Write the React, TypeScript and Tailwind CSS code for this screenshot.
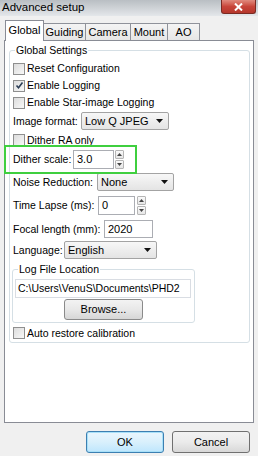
import React from 'react'

function Check({ checked = false }: { checked?: boolean }) {
  return (
    <span className="w-[12px] h-[12px] border border-[#8f8f8f] bg-gradient-to-br from-[#dcdcdc] to-[#f8f8f8] flex items-center justify-center shrink-0">
      {checked && (
        <svg width="9" height="9" viewBox="0 0 9 9">
          <path d="M1.5 4.5 L3.5 6.8 L7.5 1.5" fill="none" stroke="#2a3c55" strokeWidth="1.6" />
        </svg>
      )}
    </span>
  )
}

function CheckRow({ label, checked, h = 'h-[17px]' }: { label: string; checked?: boolean; h?: string }) {
  return (
    <div className={`${h} flex items-center gap-[2px]`}>
      <Check checked={checked} />
      <span>{label}</span>
    </div>
  )
}

function Combo({ value, w }: { value: string; w: string }) {
  return (
    <div className={`${w} h-[18px] border border-[#a3a3a3] rounded-[2px] bg-gradient-to-b from-[#f7f7f7] to-[#e4e4e4] flex items-center justify-between pl-[3px] pr-[5px]`}>
      <span className="text-[11px]">{value}</span>
      <svg width="7" height="4" viewBox="0 0 7 4">
        <path d="M0 0 H7 L3.5 4 Z" fill="#111" />
      </svg>
    </div>
  )
}

function Spin() {
  return (
    <div className="flex flex-col gap-[1px] w-[9px]">
      {[0, 1].map((i) => (
        <div key={i} className="h-[9px] border border-[#b5b5b5] rounded-[1px] bg-gradient-to-b from-[#fafafa] to-[#e6e6e6] flex items-center justify-center">
          <svg width="5" height="3" viewBox="0 0 5 3">
            <path d={i === 0 ? 'M0 3 H5 L2.5 0 Z' : 'M0 0 H5 L2.5 3 Z'} fill="#444" />
          </svg>
        </div>
      ))}
    </div>
  )
}

function TextBox({ value, w, h = 'h-[19px]' }: { value: string; w: string; h?: string }) {
  return (
    <div className={`${w} ${h} border border-[#abadb3] bg-white flex items-center pl-[3px] text-[11px]`}>{value}</div>
  )
}

const tabs = [
  { name: 'Guiding', w: 'w-[43px]' },
  { name: 'Camera', w: 'w-[46px]' },
  { name: 'Mount', w: 'w-[38px]' },
  { name: 'AO', w: 'w-[33px]' },
]

export default function App() {
  return (
    <div className="relative w-[258px] h-[456px] overflow-hidden bg-[#f0f0f0] text-[10.5px] text-black leading-none font-['Liberation_Sans',Arial,sans-serif]">
      {/* title bar */}
      <div className="h-[16px] flex items-start justify-between bg-gradient-to-b from-[#b9bec3] to-[#e4e7ea]">
        <span className="pl-[2px] pt-[2px] text-[11.5px]">Advanced setup</span>
        <div className="w-[35px] h-[14px] mr-[2px] rounded-b-[3px] border border-[#7a2a22] border-t-0 bg-gradient-to-b from-[#e08a7e] via-[#c8453a] to-[#b5372c] flex items-center justify-center">
          <svg width="9" height="8" viewBox="0 0 9 8">
            <path d="M1 0.5 L8 7.5 M8 0.5 L1 7.5" stroke="#fff" strokeWidth="2" />
          </svg>
        </div>
      </div>

      {/* tabs */}
      <div className="mt-[4px] h-[20px] pl-[5px] flex items-end">
        <div className="relative z-10 -mb-px w-[39px] h-[21px] bg-white border border-b-0 border-[#898c95] flex items-center justify-center text-[11px] pb-[1px]">
          Global
        </div>
        {tabs.map((t) => (
          <div key={t.name} className={`${t.w} h-[17px] -ml-px bg-gradient-to-b from-[#f4f4f4] to-[#e6e6e6] border border-b-0 border-[#8f929a] flex items-center justify-center text-[11px]`}>
            {t.name}
          </div>
        ))}
      </div>

      {/* panel */}
      <div className="ml-[4px] w-[250px] h-[383px] border border-[#898c95] bg-white pt-[9px]">
        <div className="relative ml-[4px] w-[241px] h-[293px] border border-[#d5dfe5] rounded-[3px] pl-[2px] pt-[9px]">
          <span className="absolute -top-[6px] left-[5px] bg-white px-[1px]">Global Settings</span>

          <div className="pl-[1px]">
            <CheckRow label="Reset Configuration" />
            <CheckRow label="Enable Logging" checked />
            <CheckRow label="Enable Star-image Logging" />
            <div className="h-[20px] flex items-center">
              <span className="w-[68px]">Image format:</span>
              <Combo value="Low Q JPEG" w="w-[88px]" />
            </div>
            <CheckRow label="Dither RA only" h="h-[18px]" />
            <div className="h-[20px] flex items-center">
              <span className="w-[60px]">Dither scale:</span>
              <TextBox value="3.0" w="w-[41px]" />
              <div className="ml-[1px]"><Spin /></div>
            </div>
            <div className="mt-[3px] h-[20px] flex items-center">
              <span className="w-[84px]">Noise Reduction:</span>
              <Combo value="None" w="w-[77px]" />
            </div>
            <div className="mt-[3px] h-[21px] flex items-center">
              <span className="w-[85px]">Time Lapse (ms):</span>
              <TextBox value="0" w="w-[37px]" />
              <div className="ml-[2px]"><Spin /></div>
            </div>
            <div className="mt-[3px] h-[20px] flex items-center">
              <span className="w-[91px]">Focal length (mm):</span>
              <TextBox value="2020" w="w-[49px]" h="h-[18px]" />
            </div>
            <div className="mt-[1px] h-[20px] flex items-center">
              <span className="w-[51px]">Language:</span>
              <Combo value="English" w="w-[93px]" />
            </div>
          </div>

          {/* log file groupbox */}
          <div className="relative mt-[9px] w-[183px] h-[54px] border border-[#d5dfe5] rounded-[3px] pt-[9px] pl-[2px] flex flex-col">
            <span className="absolute -top-[6px] left-[5px] bg-white px-[1px]">Log File Location</span>
            <div className="w-[176px] h-[19px] border border-[#d9dde3] bg-white flex items-center pl-[2px]">
              C:\Users\VenuS\Documents\PHD2
            </div>
            <button className="mt-[1px] self-center -ml-[2px] w-[79px] h-[21px] border border-[#8a8a8a] rounded-[3px] bg-gradient-to-b from-[#f3f3f3] via-[#e8e8e8] to-[#d6d6d6] text-[11px]">
              Browse...
            </button>
          </div>

          <div className="mt-[1px] pl-[1px]">
            <CheckRow label="Auto restore calibration" h="h-[18px]" />
          </div>
        </div>
      </div>

      {/* buttons */}
      <div className="mt-[8px] pr-[8px] flex justify-end gap-[8px]">
        <button className="w-[78px] h-[22px] rounded-[3px] border border-[#3c7fb1] bg-gradient-to-b from-[#eaf6fd] via-[#d9f0fc] to-[#bee6fd] shadow-[inset_0_0_0_1px_#a8e0f8] text-[11px]">
          OK
        </button>
        <button className="w-[78px] h-[22px] rounded-[3px] border border-[#707070] bg-gradient-to-b from-[#f2f2f2] via-[#ebebeb] to-[#d8d8d8] text-[11px]">
          Cancel
        </button>
      </div>

      {/* green highlight annotation */}
      <div className="absolute left-[4px] top-[145px] w-[133px] h-[29px] border-2 border-[#3fcf3f]" />
    </div>
  )
}
